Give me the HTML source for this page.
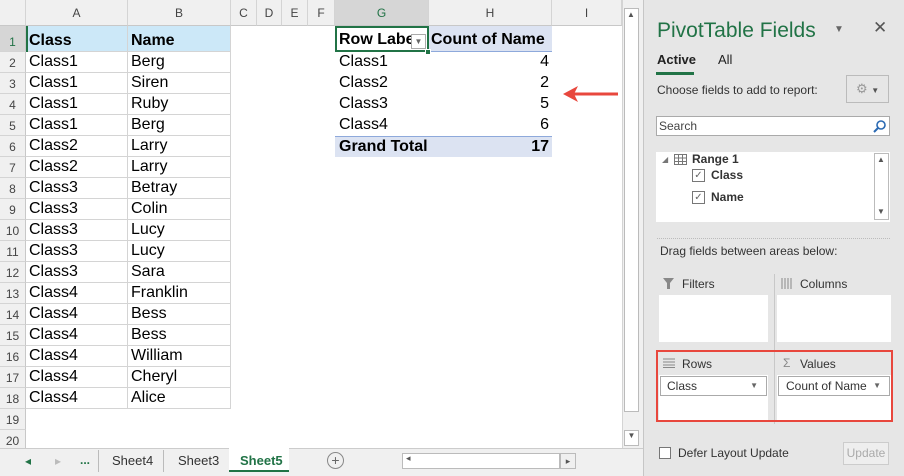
<!DOCTYPE html>
<html><head><style>
*{margin:0;padding:0;box-sizing:border-box}
body{width:904px;height:476px;overflow:hidden;background:#fff;font-family:"Liberation Sans",Arial,sans-serif;position:relative}
.a{position:absolute}
.ch{position:absolute;top:0;height:26px;background:#f0f0f0;border-right:1px solid #d4d4d4;border-bottom:1px solid #c8c8c8;font-size:12px;color:#444;text-align:center;line-height:26px}
.rh{position:absolute;left:0;width:26px;background:#f0f0f0;border-bottom:1px solid #d4d4d4;border-right:1px solid #c8c8c8;font-size:12px;color:#444;text-align:center}
.c{position:absolute;font-size:16px;color:#000;padding-left:3px;white-space:nowrap;overflow:hidden;border-right:1px solid #d4d4d4;border-bottom:1px solid #d4d4d4;line-height:20px}
.p{font-size:12px;color:#333}
</style></head><body>
<div class="ch" style="left:0;width:26px;"></div>
<div class="ch" style="left:26px;width:102px">A</div>
<div class="ch" style="left:128px;width:103px">B</div>
<div class="ch" style="left:231px;width:26px">C</div>
<div class="ch" style="left:257px;width:25px">D</div>
<div class="ch" style="left:282px;width:26px">E</div>
<div class="ch" style="left:308px;width:27px">F</div>
<div class="ch" style="left:335px;width:94px;background:#d6d6d6;color:#217346">G</div>
<div class="ch" style="left:429px;width:123px">H</div>
<div class="ch" style="left:552px;width:70px">I</div>
<div class="a" style="left:622px;top:0;width:21px;height:448px;background:#f0f0f0;border-left:1px solid #d4d4d4"></div>
<div class="a" style="left:624px;top:8px;width:15px;height:404px;border:1px solid #bbb;background:#fff"></div>
<div class="a" style="left:624px;top:430px;width:15px;height:16px;border:1px solid #bbb;background:#fff;font-size:8px;text-align:center;color:#555">▼</div>
<div class="a" style="left:627px;top:10px;font-size:8px;color:#555">▲</div>
<div id="rows"></div>
<div class="a" style="left:26px;top:26px;width:2px;height:26px;background:#217346"></div>
<div class="a" style="left:335px;top:26px;width:217px;height:26px;background:#dce3f2;border-bottom:1px solid #8ea9db"></div>
<div class="a" style="left:335px;top:26px;width:94px;height:26px;border:2px solid #217346;background:#fff"></div>
<div class="a" style="left:425px;top:49px;width:6px;height:6px;background:#217346;border:1px solid #fff"></div>
<div class="a" style="left:339px;top:31px;font-size:16px;font-weight:bold;width:72px;overflow:hidden;white-space:nowrap">Row Labels</div>
<div class="a" style="left:411px;top:34px;width:15px;height:15px;border:1px solid #aaa;background:#fff;font-size:8px;color:#666;text-align:center;line-height:14px">▼</div>
<div class="a" style="left:431px;top:31px;font-size:16px;font-weight:bold">Count of Name</div>
<div class="a" style="left:335px;top:136px;width:217px;height:21px;background:#dce3f2;border-top:1px solid #8ea9db"></div>
<div class="a" style="left:339px;top:138px;font-size:16px;font-weight:bold">Grand Total</div>
<div class="a" style="left:500px;top:138px;width:49px;text-align:right;font-size:16px;font-weight:bold">17</div>
<svg class="a" style="left:560px;top:84px" width="60" height="20"><line x1="58" y1="10" x2="10" y2="10" stroke="#e8473d" stroke-width="3"/><path d="M3 10 L18 2 L14 10 L18 18Z" fill="#e8473d"/></svg>
<div class="a" style="left:0;top:448px;width:643px;height:28px;background:#f0f0f0;border-top:1px solid #ccc"></div>
<div class="a p" style="left:25px;top:454px;color:#217346">◂</div>
<div class="a p" style="left:55px;top:454px;color:#bbb">▸</div>
<div class="a p" style="left:80px;top:453px;color:#217346;font-weight:bold">...</div>
<div class="a" style="left:98px;top:450px;width:1px;height:22px;background:#bbb"></div>
<div class="a p" style="left:112px;top:453px;font-size:13px">Sheet4</div>
<div class="a" style="left:163px;top:450px;width:1px;height:22px;background:#bbb"></div>
<div class="a p" style="left:178px;top:453px;font-size:13px">Sheet3</div>
<div class="a" style="left:229px;top:447px;width:60px;height:25px;background:#fff;border-bottom:2px solid #217346"></div>
<div class="a" style="left:240px;top:453px;font-size:13px;color:#217346;font-weight:bold">Sheet5</div>
<div class="a" style="left:327px;top:452px;width:17px;height:17px;border:1px solid #888;border-radius:50%;text-align:center;font-size:14px;line-height:14px;color:#666">+</div>
<div class="a" style="left:402px;top:453px;width:158px;height:16px;border:1px solid #bbb;background:#fff"></div>
<div class="a" style="left:406px;top:453px;font-size:9px;color:#555">◂</div>
<div class="a" style="left:560px;top:453px;width:16px;height:16px;border:1px solid #bbb;background:#f0f0f0;font-size:9px;text-align:center;color:#555;line-height:14px">▸</div>
<div class="a" style="left:643px;top:0;width:261px;height:476px;background:#e6e6e6;border-left:1px solid #c6c6c6"></div>
<div class="a" style="left:657px;top:19px;font-size:21px;color:#217346">PivotTable Fields</div>
<div class="a" style="left:834px;top:24px;font-size:10px;color:#666">▼</div>
<div class="a" style="left:873px;top:18px;font-size:17px;color:#555">✕</div>
<div class="a" style="left:657px;top:52px;font-size:13px;font-weight:bold;color:#222">Active</div>
<div class="a" style="left:718px;top:52px;font-size:13px;color:#222">All</div>
<div class="a" style="left:656px;top:72px;width:38px;height:3px;background:#217346"></div>
<div class="a p" style="left:657px;top:83px">Choose fields to add to report:</div>
<div class="a" style="left:846px;top:75px;width:43px;height:28px;border:1px solid #bbb;background:#e6e6e6;font-size:13px;color:#999;line-height:26px;padding-left:9px">⚙ <span style="font-size:8px;color:#555">▼</span></div>
<div class="a" style="left:656px;top:116px;width:234px;height:20px;border:1px solid #aaa;background:#fff;font-size:12px;color:#444;padding-left:2px;line-height:18px">Search</div>
<svg class="a" style="left:873px;top:119px" width="14" height="14"><circle cx="8" cy="6" r="4" fill="none" stroke="#2b6ab3" stroke-width="1.6"/><line x1="5" y1="9" x2="1" y2="13" stroke="#2b6ab3" stroke-width="2"/></svg>
<div class="a" style="left:656px;top:152px;width:234px;height:70px;background:#fff"></div>
<div class="a" style="left:874px;top:153px;width:15px;height:67px;border:1px solid #bbb;background:#fff"></div>
<div class="a" style="left:877px;top:155px;font-size:8px;color:#555">▲</div>
<div class="a" style="left:877px;top:207px;font-size:8px;color:#555">▼</div>
<div class="a" style="left:662px;top:155px;font-size:8px;color:#777">◢</div>
<svg class="a" style="left:674px;top:154px" width="13" height="11"><rect x="0.5" y="0.5" width="12" height="10" fill="#fff" stroke="#777"/><line x1="0" y1="4" x2="13" y2="4" stroke="#777"/><line x1="0" y1="7.5" x2="13" y2="7.5" stroke="#777"/><line x1="4.5" y1="0" x2="4.5" y2="11" stroke="#777"/><line x1="8.5" y1="0" x2="8.5" y2="11" stroke="#777"/></svg>
<div class="a" style="left:692px;top:152px;font-size:12px;font-weight:bold;color:#333">Range 1</div>
<div class="a" style="left:692px;top:169px;width:13px;height:13px;border:1px solid #777;background:#fff;font-size:10px;color:#666;line-height:11px;text-align:center">✓</div>
<div class="a" style="left:711px;top:168px;font-size:12px;font-weight:bold;color:#333">Class</div>
<div class="a" style="left:692px;top:191px;width:13px;height:13px;border:1px solid #777;background:#fff;font-size:10px;color:#666;line-height:11px;text-align:center">✓</div>
<div class="a" style="left:711px;top:190px;font-size:12px;font-weight:bold;color:#333">Name</div>
<div class="a" style="left:657px;top:238px;width:233px;border-top:1px dotted #bbb"></div>
<div class="a p" style="left:660px;top:244px">Drag fields between areas below:</div>
<div class="a" style="left:774px;top:274px;width:1px;height:150px;background:#c8c8c8"></div>
<svg class="a" style="left:663px;top:278px" width="12" height="11"><path d="M0 0H11L7 5V11H4V5Z" fill="#888"/></svg>
<svg class="a" style="left:781px;top:278px" width="12" height="11"><g stroke="#888"><line x1="1" y1="0" x2="1" y2="11"/><line x1="4" y1="0" x2="4" y2="11"/><line x1="7" y1="0" x2="7" y2="11"/><line x1="10" y1="0" x2="10" y2="11"/></g></svg>
<div class="a p" style="left:682px;top:277px">Filters</div>
<div class="a p" style="left:800px;top:277px">Columns</div>
<div class="a" style="left:659px;top:295px;width:109px;height:47px;background:#fff"></div>
<div class="a" style="left:777px;top:295px;width:114px;height:47px;background:#fff"></div>
<svg class="a" style="left:663px;top:358px" width="12" height="10"><g stroke="#888"><line x1="0" y1="1" x2="12" y2="1"/><line x1="0" y1="4" x2="12" y2="4"/><line x1="0" y1="7" x2="12" y2="7"/><line x1="0" y1="9.5" x2="12" y2="9.5"/></g></svg>
<div class="a p" style="left:783px;top:356px;color:#888">Σ</div>
<div class="a p" style="left:682px;top:357px">Rows</div>
<div class="a p" style="left:800px;top:357px">Values</div>
<div class="a" style="left:659px;top:375px;width:109px;height:46px;background:#fff"></div>
<div class="a" style="left:777px;top:375px;width:114px;height:46px;background:#fff"></div>
<div class="a p" style="left:660px;top:376px;width:107px;height:20px;border:1px solid #aaa;background:#fff;padding-left:6px;line-height:18px">Class<span style="position:absolute;right:8px;font-size:8px;color:#666">▼</span></div>
<div class="a p" style="left:778px;top:376px;width:112px;height:20px;border:1px solid #aaa;background:#fff;padding-left:7px;line-height:18px">Count of Name<span style="position:absolute;right:8px;font-size:8px;color:#666">▼</span></div>
<div class="a" style="left:656px;top:350px;width:237px;height:72px;border:2px solid #e8473d"></div>
<div class="a" style="left:659px;top:447px;width:12px;height:12px;border:1px solid #777;background:#fff"></div>
<div class="a p" style="left:678px;top:446px">Defer Layout Update</div>
<div class="a" style="left:843px;top:442px;width:46px;height:23px;border:1px solid #ccc;background:#eee;font-size:12px;color:#aaa;text-align:center;line-height:21px">Update</div>
<script>
(function(){
var d=[["Class","Name"],["Class1","Berg"],["Class1","Siren"],["Class1","Ruby"],["Class1","Berg"],["Class2","Larry"],["Class2","Larry"],["Class3","Betray"],["Class3","Colin"],["Class3","Lucy"],["Class3","Lucy"],["Class3","Sara"],["Class4","Franklin"],["Class4","Bess"],["Class4","Bess"],["Class4","William"],["Class4","Cheryl"],["Class4","Alice"]];
var pv={2:["Class1","4"],3:["Class2","2"],4:["Class3","5"],5:["Class4","6"]};
var h="";
for(var r=1;r<=20;r++){
 var y=r==1?26:52+(r-2)*21, ht=r==1?26:21;
 h+='<div class="rh" style="top:'+y+'px;height:'+ht+'px;line-height:'+(r==1?32:22)+'px;'+(r==1?'background:#d6d6d6;color:#217346':'')+'">'+r+'</div>';
 if(r<=18){
  var row=d[r-1],bg=r==1?'background:#cce8f8;font-weight:bold;padding-top:5px;':'';
  h+='<div class="c" style="left:26px;top:'+y+'px;width:102px;height:'+ht+'px;'+bg+'">'+row[0]+'</div>';
  h+='<div class="c" style="left:128px;top:'+y+'px;width:103px;height:'+ht+'px;'+bg+'">'+row[1]+'</div>';
 }
 if(pv[r]){
  h+='<div class="a" style="left:339px;top:'+(y+1)+'px;font-size:16px">'+pv[r][0]+'</div>';
  h+='<div class="a" style="left:500px;top:'+(y+1)+'px;width:49px;text-align:right;font-size:16px">'+pv[r][1]+'</div>';
 }
}
document.getElementById("rows").innerHTML=h;
})();
</script>
</body></html>
